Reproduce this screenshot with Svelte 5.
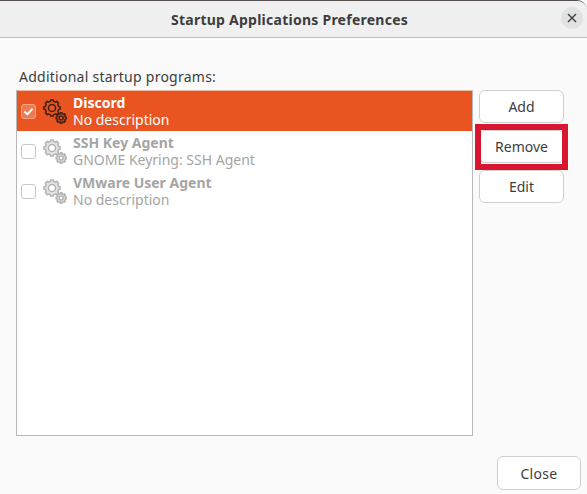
<script>
    var programs = [
        { name: "Discord", description: "No description", checked: true, enabled: true },
        { name: "SSH Key Agent", description: "GNOME Keyring: SSH Agent", checked: false, enabled: false },
        { name: "VMware User Agent", description: "No description", checked: false, enabled: false }
    ];
    var buttons = ["Add", "Remove", "Edit"];

    // outline of a cog, teeth are trapezoids around the centre
    function cog(cx, cy, outer, inner, teeth) {
        var step = (Math.PI * 2) / teeth;
        var d = "";
        for (var i = 0; i < teeth; i++) {
            var a = i * step;
            var pts = [
                [inner, a - step * 0.5],
                [inner, a - step * 0.3],
                [outer, a - step * 0.2],
                [outer, a + step * 0.2],
                [inner, a + step * 0.3]
            ];
            for (var p of pts) {
                var x = cx + p[0] * Math.cos(p[1]);
                var y = cy + p[0] * Math.sin(p[1]);
                d += (d ? "L" : "M") + x.toFixed(2) + " " + y.toFixed(2) + " ";
            }
        }
        return d + "Z";
    }

    var bigCog = cog(9, 9, 8.2, 6.8, 8);
    var smallCog = cog(18.2, 19, 5.2, 4.2, 8);
</script>

{#snippet gears()}
    <svg class="gears" viewBox="0 0 24 25" width="24" height="25">
        <path class="body" d={bigCog} />
        <circle class="hole" cx="9" cy="9" r="3.6" />
        <path class="body" d={smallCog} />
        <circle class="hole" cx="18.2" cy="19" r="2" />
    </svg>
{/snippet}

<div class="window">
    <header class="titlebar">
        <h1>Startup Applications Preferences</h1>
        <button class="close-x" type="button" aria-label="Close">
            <svg viewBox="0 0 10 10" width="10" height="10">
                <path d="M1 1 L9 9 M9 1 L1 9" stroke="#3d3d3d" stroke-width="1.4" fill="none" />
            </svg>
        </button>
    </header>

    <main class="content">
        <div class="label">Additional startup programs:</div>
        <div class="columns">
            <div class="list">
                {#each programs as program}
                    <div class="row" class:selected={program.checked} class:disabled={!program.enabled}>
                        <span class="check">
                            {#if program.checked}
                                <svg viewBox="0 0 15 15" width="15" height="15">
                                    <path d="M3.4 7.6 L6.4 10.4 L11.6 4.6" stroke="#fff" stroke-width="2" fill="none" />
                                </svg>
                            {/if}
                        </span>
                        {@render gears()}
                        <div class="text">
                            <strong>{program.name}</strong>
                            <span>{program.description}</span>
                        </div>
                    </div>
                {/each}
            </div>
            <div class="side">
                {#each buttons as label}
                    <div class="btn-wrap">
                        <button class="btn" type="button">{label}</button>
                        {#if label == "Remove"}
                            <div class="highlight"></div>
                        {/if}
                    </div>
                {/each}
            </div>
        </div>
        <div class="footer">
            <button class="btn close" type="button">Close</button>
        </div>
    </main>
</div>

<style>
    :global(body) {
        margin: 0;
        background: #fafafa;
    }

    .window {
        width: 587px;
        height: 494px;
        display: flex;
        flex-direction: column;
        overflow: hidden;
        background: #fafafa;
        color: #3d3d3d;
        font-family: "Noto Sans", "Open Sans", sans-serif;
        font-size: 14px;
        border-radius: 0 10px 0 0;
        box-sizing: border-box;
        border-top: 1px solid #55504e;
    }

    .titlebar {
        height: 37px;
        box-sizing: border-box;
        flex: none;
        display: flex;
        align-items: center;
        justify-content: center;
        padding-right: 8px;
        position: relative;
        background: #f0f0f0;
        border-bottom: 1px solid #bdbdbd;
    }

    .titlebar h1 {
        margin: 0;
        font-size: 14px;
        font-weight: 700;
        letter-spacing: 0.25px;
        color: #3d3d3d;
    }

    .close-x {
        position: absolute;
        right: 4px;
        top: 6px;
        width: 22px;
        height: 22px;
        padding: 0;
        border: none;
        border-radius: 50%;
        background: #e2e2e2;
        display: flex;
        align-items: center;
        justify-content: center;
    }

    .content {
        flex: 1;
        display: flex;
        flex-direction: column;
        padding: 29px 6px 4px 16px;
        min-height: 0;
    }

    .label {
        height: 23px;
        line-height: 19px;
        margin-left: 3px;
        letter-spacing: 0.25px;
    }

    .columns {
        display: flex;
        gap: 6px;
        padding-right: 17px;
        height: 346px;
    }

    .list {
        width: 457px;
        box-sizing: border-box;
        background: #fff;
        border: 1px solid #b8b8b8;
        border-top-color: #e8b9a0;
    }

    .row {
        height: 40px;
        display: flex;
        align-items: center;
        padding-left: 4px;
    }

    .row.selected {
        background: #e95420;
        color: #fff;
    }

    .row.disabled {
        color: #a5a5a5;
    }

    .check {
        width: 15px;
        height: 15px;
        flex: none;
        box-sizing: border-box;
        border: 1px solid #c9c9c9;
        border-radius: 3px;
        background: #fff;
        display: flex;
    }

    .selected .check {
        background: #ed7a50;
        border-color: #f3a488;
    }

    .check svg {
        margin: -1px;
        flex: none;
    }

    .gears {
        flex: none;
        margin-left: 7px;
        margin-top: 1px;
    }

    .gears .body {
        fill: #e4e4e4;
        stroke: #b3b3b3;
        stroke-width: 1.5;
        stroke-linejoin: round;
    }

    .gears .hole {
        fill: #fff;
        stroke: #b3b3b3;
        stroke-width: 1.5;
    }

    .selected .gears .body {
        fill: #e95420;
        stroke: #3f2014;
    }

    .selected .gears .hole {
        fill: #e95420;
        stroke: #3f2014;
    }

    .text {
        margin-left: 6px;
        display: flex;
        flex-direction: column;
        line-height: 17px;
    }

    .text strong {
        font-weight: 700;
    }

    .side {
        display: flex;
        flex-direction: column;
        gap: 7px;
        width: 85px;
    }

    .btn-wrap {
        position: relative;
        height: 33px;
    }

    .btn {
        width: 85px;
        height: 33px;
        box-sizing: border-box;
        padding: 0;
        background: #fff;
        border: 1px solid #cfcfcf;
        border-radius: 6px;
        color: #3d3d3d;
        font: inherit;
    }

    .highlight {
        position: absolute;
        left: -4px;
        top: -6px;
        width: 93px;
        height: 46px;
        box-sizing: border-box;
        border: 6px solid #d9162f;
    }

    .footer {
        margin-top: auto;
        display: flex;
        justify-content: flex-end;
    }

    .close {
        width: 84px;
        height: 34px;
        letter-spacing: 0.3px;
    }
</style>
